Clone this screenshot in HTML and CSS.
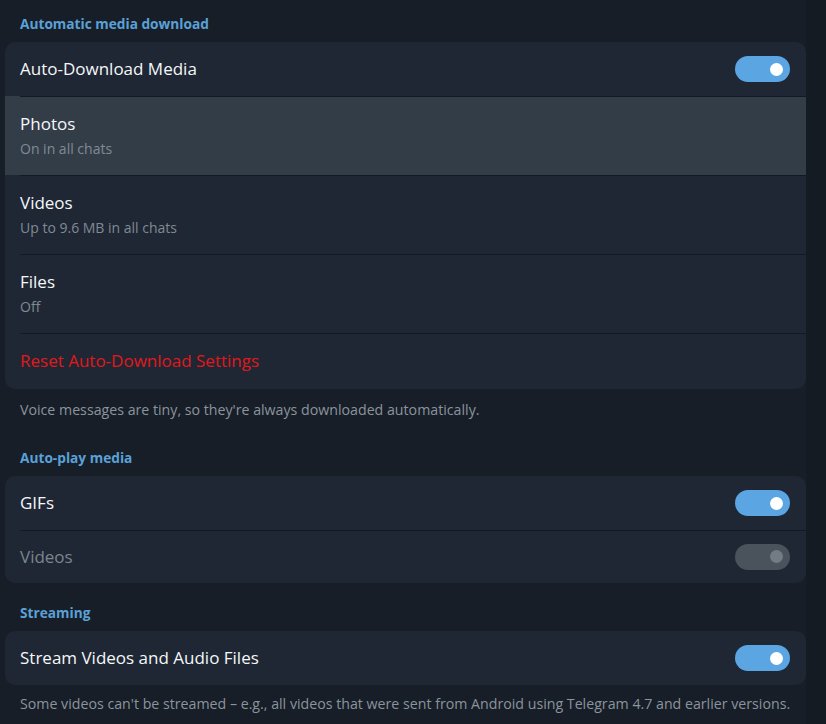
FILE: index.html
```html
<!DOCTYPE html>
<html>
<head>
<meta charset="utf-8">
<link rel="stylesheet" href="styles.css">
</head>
<body>
<div class="page">
  <div class="section-title">Automatic media download</div>
  <div class="card">
    <div class="row single">
      <span class="label">Auto-Download Media</span>
      <span class="toggle on"><span class="knob"></span></span>
    </div>
    <div class="row double hover">
      <span class="label">Photos</span>
      <span class="sub">On in all chats</span>
    </div>
    <div class="row double">
      <span class="label">Videos</span>
      <span class="sub">Up to 9.6 MB in all chats</span>
    </div>
    <div class="row double">
      <span class="label">Files</span>
      <span class="sub">Off</span>
    </div>
    <div class="row single reset">
      <span class="label danger">Reset Auto-Download Settings</span>
    </div>
  </div>
  <div class="caption">Voice messages are tiny, so they're always downloaded automatically.</div>

  <div class="section-title">Auto-play media</div>
  <div class="card">
    <div class="row single">
      <span class="label">GIFs</span>
      <span class="toggle on"><span class="knob"></span></span>
    </div>
    <div class="row single short">
      <span class="label disabled">Videos</span>
      <span class="toggle off"><span class="knob"></span></span>
    </div>
  </div>

  <div class="section-title after-card">Streaming</div>
  <div class="card">
    <div class="row single">
      <span class="label">Stream Videos and Audio Files</span>
      <span class="toggle on"><span class="knob"></span></span>
    </div>
  </div>
  <div class="caption last">Some videos can't be streamed – e.g., all videos that were sent from Android using Telegram 4.7 and earlier versions.</div>
</div>
</body>
</html>
```
FILE: styles.css
```css
html, body {
  margin: 0;
  padding: 0;
  background: #151b22;
  height: 100%;
}
body {
  font-family: "Open Sans", "Noto Sans", sans-serif;
  color: #f2f4f6;
}
.page {
  width: 806px;
  background: #171e27;
  min-height: 100%;
  padding: 0 0 0 5px;
  box-sizing: border-box;
  overflow: hidden;
}
.section-title {
  color: #5aa1d8;
  font-weight: 700;
  font-size: 13.7px;
  padding: 14px 0 0 15px;
  height: 42px;
  box-sizing: border-box;
  line-height: 20px;
}
.section-title.after-card {
  margin-top: 6px;
}
.card {
  background: #1e2733;
  border-radius: 10px;
  overflow: hidden;
}
.row {
  display: flex;
  padding: 0 16px 0 15px;
  box-sizing: border-box;
  position: relative;
}
.row + .row::before {
  content: "";
  position: absolute;
  left: 15px;
  right: 0;
  top: 0;
  height: 1px;
  background: #131a22;
}
.row.single {
  height: 54px;
  align-items: center;
  justify-content: space-between;
}
.row.short {
  height: 53px;
}
.row.reset {
  height: 56px;
}
.row.double {
  height: 79px;
  flex-direction: column;
  justify-content: center;
}
.row.hover {
  background: #333d48;
}
.label {
  font-size: 17px;
  line-height: 24px;
  color: #f5f7f9;
}
.sub {
  font-size: 14px;
  line-height: 20px;
  color: #808a95;
  margin-top: 3px;
}
.danger {
  color: #e3171c;
}
.disabled {
  color: #7c858f;
}
.toggle {
  width: 55px;
  height: 26px;
  border-radius: 13px;
  position: relative;
  flex: none;
}
.toggle.on {
  background: #5ba6e2;
}
.toggle.off {
  background: #4a525c;
}
.knob {
  position: absolute;
  width: 13px;
  height: 13px;
  border-radius: 50%;
  top: 6.5px;
  right: 7px;
  background: #ffffff;
}
.toggle.off .knob {
  background: #737b84;
}
.caption {
  font-size: 14.2px;
  line-height: 20px;
  color: #8b949e;
  padding: 11px 0 14px 15px;
  white-space: nowrap;
}
.caption.last {
  padding-top: 9px;
}
```
